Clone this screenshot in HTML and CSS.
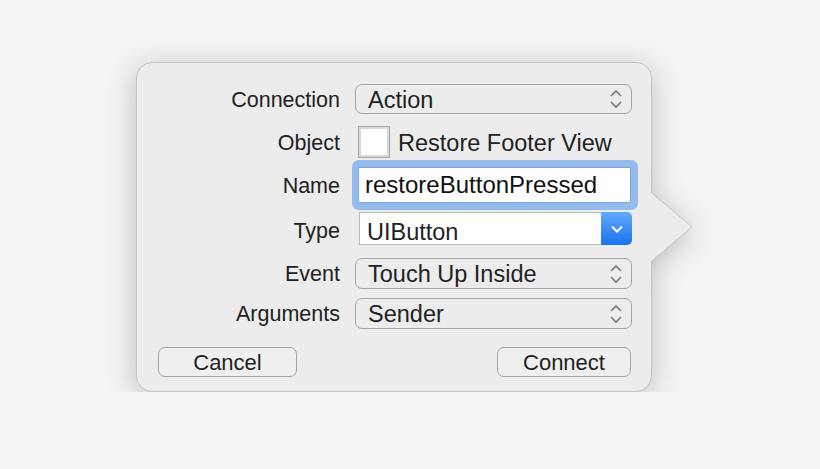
FILE: index.html
```html
<!DOCTYPE html>
<html lang="en">
<head>
    <meta charset="UTF-8">
    <title>Connection</title>
    <link rel="stylesheet" href="styles.css">
</head>
<body>
    <div class="stage">
        <div class="popover">
            <div class="panel">
                <div class="row row-connection">
                    <div class="label">Connection</div>
                    <div class="popup">
                        <span>Action</span>
                        <svg class="stepper" width="14" height="22" viewBox="0 0 14 22"><path d="M2 8 L7 3 L12 8 M2 14 L7 19 L12 14" fill="none" stroke="#7a7a7a" stroke-width="1.6"/></svg>
                    </div>
                </div>
                <div class="row row-object">
                    <div class="label">Object</div>
                    <div class="checkbox"><div class="checkbox-inner"></div></div>
                    <span class="object-name">Restore Footer View</span>
                </div>
                <div class="row row-name">
                    <div class="label">Name</div>
                    <div class="focus-ring">
                        <div class="text-field">restoreButtonPressed</div>
                    </div>
                </div>
                <div class="row row-type">
                    <div class="label">Type</div>
                    <div class="combo">
                        <div class="combo-text">UIButton</div>
                        <div class="combo-button">
                            <svg width="14" height="10" viewBox="0 0 14 10"><path d="M2 2.5 L7 7.5 L12 2.5" fill="none" stroke="#fff" stroke-width="2"/></svg>
                        </div>
                    </div>
                </div>
                <div class="row row-event">
                    <div class="label">Event</div>
                    <div class="popup">
                        <span>Touch Up Inside</span>
                        <svg class="stepper" width="14" height="22" viewBox="0 0 14 22"><path d="M2 8 L7 3 L12 8 M2 14 L7 19 L12 14" fill="none" stroke="#7a7a7a" stroke-width="1.6"/></svg>
                    </div>
                </div>
                <div class="row row-args">
                    <div class="label">Arguments</div>
                    <div class="popup">
                        <span>Sender</span>
                        <svg class="stepper" width="14" height="22" viewBox="0 0 14 22"><path d="M2 8 L7 3 L12 8 M2 14 L7 19 L12 14" fill="none" stroke="#7a7a7a" stroke-width="1.6"/></svg>
                    </div>
                </div>
                <div class="actions">
                    <button class="btn btn-cancel">Cancel</button>
                    <button class="btn btn-connect">Connect</button>
                </div>
            </div>
            <svg class="arrow" width="44" height="72" viewBox="0 0 44 72">
                <path d="M0 0 L41 34 L0 68 Z" fill="#ececec"/>
                <path d="M1 0 L41 34 L1 68" fill="none" stroke="#c4c4c4" stroke-width="1"/>
            </svg>
        </div>
    </div>
</body>
</html>
```

FILE: styles.css
```css
body { margin: 0; background-color: #f4f4f4; font-family: 'Liberation Sans', Arial, sans-serif; color: #222; }
.stage { padding: 62px 0 0 136px; }
.popover { position: relative; width: 516px; filter: drop-shadow(0 5px 14px rgba(0,0,0,0.22)); }
.panel { box-sizing: border-box; width: 516px; height: 330px; background-color: #ececec; border: 1px solid #c4c4c4; border-radius: 16px; padding: 21px 20px 0 20px; }
.arrow { position: absolute; left: 515px; top: 131px; }

.row { display: flex; align-items: center; }
.row > * { flex-shrink: 0; }
.label { width: 183px; margin-right: 15px; text-align: right; font-size: 21.5px; padding-top: 2px; }
.row-connection { height: 30px; }
.row-object { height: 32px; margin-top: 12px; }
.row-name { height: 50px; margin-top: 2px; margin-right: -10px; }
.row-type { height: 33px; margin-top: 2px; }
.row-type .label { padding-top: 6px; }
.row-event { height: 31px; margin-top: 13px; }
.row-args { height: 31px; margin-top: 9px; }

.popup { box-sizing: border-box; width: 277px; height: 100%; border: 1.5px solid #a4a4a4; border-radius: 7px; display: flex; align-items: center; justify-content: space-between; padding: 2px 8px 0 12px; font-size: 23.5px; }
.stepper { margin-top: -2px; }

.checkbox { box-sizing: border-box; width: 32px; height: 32px; margin-left: 3px; border: 1px solid #a6a6a6; background-color: #d9d9d9; padding: 2px; }
.checkbox-inner { width: 100%; height: 100%; background-color: #fff; }
.object-name { margin-left: 8px; font-size: 23.5px; padding-top: 2px; }

.focus-ring { box-sizing: border-box; width: 286px; height: 50px; margin-left: -3px; border-radius: 7px; background-color: #95bbec; padding: 7px 7px 7px 6px; }
.text-field { box-sizing: border-box; height: 100%; background-color: #fff; border: 1px solid #7fa6dc; padding: 3px 0 0 6px; font-size: 24px; color: #111; }

.combo { box-sizing: border-box; width: 273px; height: 100%; margin-left: 4px; display: flex; }
.combo-text { flex: 1; background-color: #fff; border: 1px solid #b9b9b9; border-right: none; font-size: 23.5px; padding: 6px 0 0 7px; }
.combo-button { width: 31px; border-radius: 0 5px 5px 0; background: linear-gradient(#62aafc, #1b72ef); display: flex; align-items: center; justify-content: center; }

.actions { display: flex; justify-content: space-between; margin-top: 18px; }
.btn { box-sizing: border-box; height: 30px; border: 1.5px solid #a4a4a4; border-radius: 7px; background-color: #efefef; font-family: 'Liberation Sans', Arial, sans-serif; font-size: 22px; color: #222; padding: 1px 0 0 0; }
.btn-cancel { width: 139px; margin-left: 1px; }
.btn-connect { width: 134px; }
```
